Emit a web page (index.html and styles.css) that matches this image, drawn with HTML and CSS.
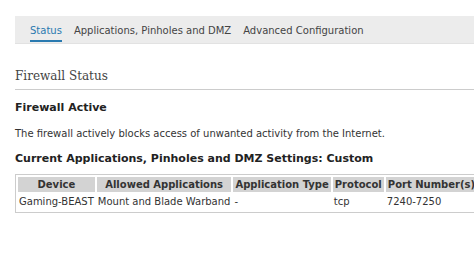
FILE: index.html
```html
<!DOCTYPE html>
<html>
<head>
<meta charset="utf-8">
<link rel="stylesheet" href="styles.css">
</head>
<body>
<div class="page">
  <nav class="tabs">
    <a class="tab active">Status</a>
    <a class="tab">Applications, Pinholes and DMZ</a>
    <a class="tab">Advanced Configuration</a>
  </nav>
  <h1 class="title">Firewall Status</h1>
  <h2 class="sub">Firewall Active</h2>
  <p class="desc">The firewall actively blocks access of unwanted activity from the Internet.</p>
  <h2 class="sub sub2">Current Applications, Pinholes and DMZ Settings: Custom</h2>
  <table class="grid">
    <thead>
      <tr>
        <th class="c1">Device</th>
        <th class="c2">Allowed Applications</th>
        <th class="c3">Application Type</th>
        <th class="c4">Protocol</th>
        <th class="c5">Port Number(s)</th>
        <th class="c6"></th>
      </tr>
    </thead>
    <tbody>
      <tr>
        <td>Gaming-BEAST</td>
        <td>Mount and Blade Warband</td>
        <td>-</td>
        <td>tcp</td>
        <td>7240-7250</td>
        <td></td>
      </tr>
    </tbody>
  </table>
</div>
</body>
</html>
```
FILE: styles.css
```css
html, body { margin: 0; padding: 0; background: #fff; overflow: hidden; }
body { font-family: "DejaVu Sans", Verdana, sans-serif; color: #333; }
.page { padding: 16px 0 0 15px; }
.tabs {
  display: flex;
  gap: 12px;
  background: #ececec;
  border-bottom: 1px solid #e2e2e2;
  height: 27px;
  padding-left: 15px;
  align-items: flex-start;
}
.tab {
  font-size: 10px;
  color: #444;
  padding-top: 8px;
  padding-bottom: 3px;
  line-height: 13px;
}
.tab.active { color: #2a7ab0; border-bottom: 2px solid #2a7ab0; }
.title {
  font-family: "DejaVu Serif", Georgia, serif;
  font-weight: normal;
  font-size: 12px;
  color: #444;
  margin: 25px 0 0 0;
  padding-bottom: 6px;
  border-bottom: 1px solid #ccc;
}
.sub {
  font-size: 11px;
  font-weight: bold;
  color: #222;
  margin: 11px 0 0 0;
}
.desc { font-size: 10px; margin: 14px 0 0 0; color: #333; }
.sub2 { margin-top: 13px; }
.grid {
  margin-top: 9px;
  width: 100%;
  border: 1px solid #ccc;
  border-spacing: 2px;
  font-size: 10px;
  white-space: nowrap;
}
.grid th { background: #d3d3d3; font-weight: bold; padding: 1px 2px; line-height: 13px; }
.grid td { padding: 1px 1px 2px; color: #333; line-height: 13px; }
.grid th.c6 { width: 0; padding: 0 1px; }
```
